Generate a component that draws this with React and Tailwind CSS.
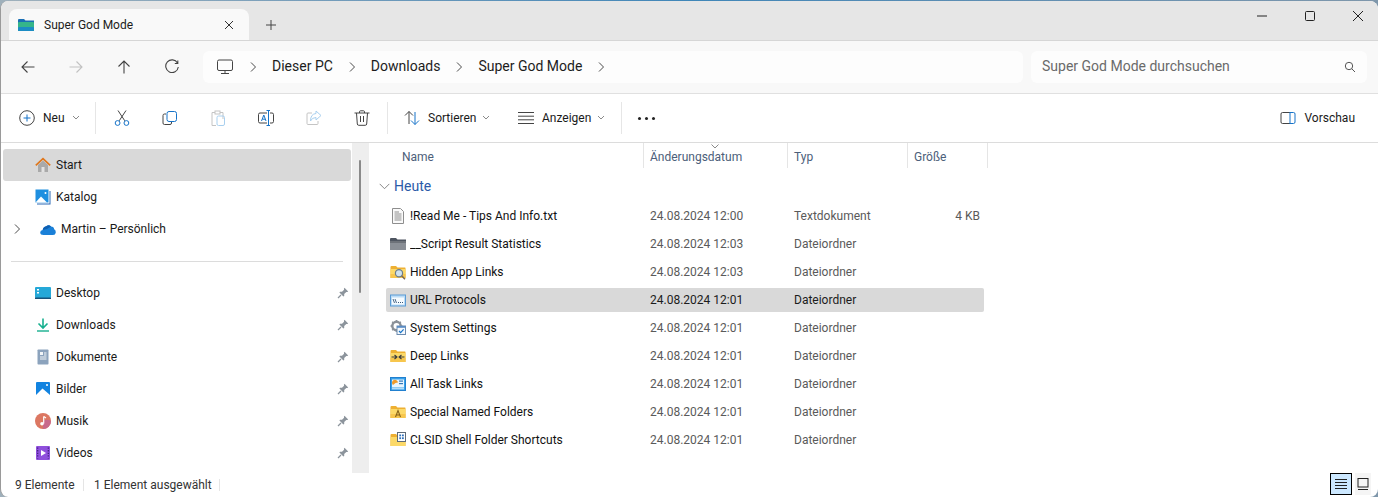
import React from "react"

const Chev = ({ className = "" }) => (
  <svg viewBox="0 0 8 12" className={`w-2 h-3 ${className}`} fill="none" stroke="#4a4a4a" strokeWidth="1">
    <path d="M2 1.5 L6.5 6 L2 10.5" />
  </svg>
)

const SmallDown = () => (
  <svg viewBox="0 0 8 6" className="w-2 h-1.5" fill="none" stroke="#8a8a8a" strokeWidth="1">
    <path d="M1 1 L4 4 L7 1" />
  </svg>
)

const Ico = ({ children, size = 16, vb = "0 0 16 16", className = "" }) => (
  <svg viewBox={vb} width={size} height={size} className={`shrink-0 ${className}`} fill="none">
    {children}
  </svg>
)

const NavArrow = ({ d, color = "#444" }) => (
  <Ico size={16}>
    <path d={d} stroke={color} strokeWidth="1.1" />
  </Ico>
)

const Pin = () => (
  <Ico size={12} vb="0 0 12 12">
    <path d="M7.5 0.8 L11.2 4.5 L10.3 5.1 L9.3 4.9 L7.2 7 L7.2 9 L6.4 9.6 L2.4 5.6 L3 4.8 L5 4.8 L7.1 2.7 L6.9 1.7 Z" fill="#8c949c" />
    <path d="M4 8 L1 11" stroke="#8c949c" strokeWidth="1.2" />
  </Ico>
)

const FolderBase = ({ children, from = "#fcd968", to = "#f4b93c" }) => (
  <Ico>
    <path d="M0.5 3 Q0.5 2 1.5 2 L6 2 L7.5 3.5 L15 3.5 Q15.5 3.5 15.5 4 L15.5 14 L0.5 14 Z" fill="#eeb032" />
    <rect x="0.5" y="5" width="15" height="9" rx="0.5" fill={from} />
    <rect x="0.5" y="10" width="15" height="4" fill={to} opacity="0.6" />
    {children}
  </Ico>
)

const navIcons = {
  home: (
    <Ico>
      <path d="M3 8 L8 3.5 L13 8 L13 15 L3 15 Z" fill="#a9a9a9" />
      <rect x="6.5" y="10" width="3" height="5" fill="#e2e2e2" />
      <path d="M0.8 8.3 L8 1.6 L15.2 8.3" stroke="#e0771c" strokeWidth="1.7" />
    </Ico>
  ),
  gallery: (
    <Ico>
      <rect x="0.5" y="0.5" width="13" height="13" fill="#1f8fe0" />
      <path d="M0.5 13.5 L6 7.5 L12 13.5 Z" fill="#fff" />
      <circle cx="10.5" cy="4" r="1" fill="#fff" />
      <path d="M14.5 2 L15.5 2 L15.5 15.5 L2 15.5 L2 14.5 L14.5 14.5 Z" fill="#2a68b5" />
    </Ico>
  ),
  cloud: (
    <Ico>
      <path d="M3.5 14 Q0.2 14 0.2 11.5 Q0.2 9.3 2.7 9 Q3.2 5.8 6.2 5.2 Q8.8 3 11 5.4 Q14 5.6 14.2 8.3 Q16 9 15.8 11.5 Q15.5 14 13 14 Z" fill="#1a80d8" />
      <path d="M2.7 9 Q3.2 5.8 6.2 5.2 Q8.8 3 11 5.4 L7 8 Z" fill="#0e5fb2" />
    </Ico>
  ),
  desktop: (
    <Ico>
      <rect x="0" y="2" width="16" height="11" rx="1" fill="#25a8d8" />
      <rect x="0" y="12.5" width="16" height="1.5" fill="#17527a" />
      <rect x="2" y="4" width="2" height="1.5" fill="#fff" />
      <rect x="2" y="7" width="2" height="1.5" fill="#fff" />
    </Ico>
  ),
  download: (
    <Ico>
      <path d="M8 1.5 L8 10.5 M3.5 6.5 L8 11 L12.5 6.5" stroke="#17b08f" strokeWidth="1.6" />
      <rect x="2" y="13.3" width="12" height="1.4" fill="#17b08f" />
    </Ico>
  ),
  docs: (
    <Ico>
      <rect x="2.5" y="0.5" width="11" height="15" rx="0.8" fill="#8ca3bd" />
      <path d="M5 4 H7.5 M9 4 H11.5 M9 6 H11.5 M5 8 H11.5 M5 10 H11.5" stroke="#f2f5f8" strokeWidth="1.1" />
      <rect x="5" y="3" width="3" height="3" fill="#f2f5f8" />
    </Ico>
  ),
  pics: (
    <Ico>
      <rect x="1" y="1" width="14" height="14" rx="1" fill="#1283e0" />
      <path d="M1 14 L7.5 7.5 L15 14 L15 15 L1 15 Z" fill="#fff" />
      <circle cx="12" cy="4" r="1" fill="#fff" />
    </Ico>
  ),
  music: (
    <Ico>
      <circle cx="8" cy="8" r="8" fill="#dc7762" />
      <path d="M8 8 A8 8 0 0 1 16 8 A8 8 0 0 1 8 16 Z" fill="#c86a8c" />
      <path d="M8.7 3.5 L8.7 10.5" stroke="#fff" strokeWidth="1.2" />
      <circle cx="7" cy="10.8" r="1.8" fill="#fff" />
      <path d="M8.7 3.5 L11 5" stroke="#fff" strokeWidth="1.2" />
    </Ico>
  ),
  video: (
    <Ico>
      <rect x="1" y="1" width="14" height="14" rx="1" fill="#8f4fdc" />
      <path d="M6 5 L11 8 L6 11 Z" fill="#fff" />
      <path d="M2.7 2.5 V13.5 M13.3 2.5 V13.5" stroke="#3d1f78" strokeWidth="1.2" strokeDasharray="1.3 1.3" />
    </Ico>
  ),
}

const fileIcons = {
  txt: (
    <Ico>
      <path d="M2.5 0.5 L10.5 0.5 L13.5 3.5 L13.5 15.5 L2.5 15.5 Z" fill="#fafafa" stroke="#8e8e8e" />
      <path d="M4.5 4 H9 M4.5 6 H11.5 M4.5 8 H11.5 M4.5 10 H11.5 M4.5 12 H11.5" stroke="#8e8e8e" />
    </Ico>
  ),
  dark: (
    <Ico>
      <path d="M0 3 Q0 2 1 2 L6 2 L7.5 3.5 L16 3.5 L16 14 L0 14 Z" fill="#4e5560" />
      <rect x="0" y="5" width="16" height="9" rx="0.5" fill="#8a8f96" />
      <rect x="0" y="5" width="16" height="2" fill="#6d7279" />
    </Ico>
  ),
  search: (
    <FolderBase>
      <circle cx="9" cy="9.2" r="3.6" fill="#cfe2ef" stroke="#6b7d8c" strokeWidth="1.2" />
      <path d="M11.6 11.8 L15 15.2" stroke="#7b6a55" strokeWidth="1.6" />
    </FolderBase>
  ),
  url: (
    <Ico>
      <rect x="0.5" y="3" width="15" height="11" fill="#bcdcf6" stroke="#5b9bd5" />
      <rect x="2" y="5.5" width="12" height="7" fill="#f6fbff" />
      <path d="M3 7 L4.5 11 M5 7 L6.5 11" stroke="#38587a" strokeWidth="0.9" />
      <path d="M8 10.5 H13" stroke="#38587a" strokeDasharray="1 1" />
    </Ico>
  ),
  gear: (
    <Ico>
      <circle cx="6.5" cy="6" r="4.2" stroke="#8a9097" strokeWidth="2.4" />
      <path d="M6.5 0 V2 M6.5 10 V12 M0.5 6 H2.5 M10.5 6 H12.5 M2.2 1.8 L3.6 3.2 M9.4 8.8 L10.8 10.2 M10.8 1.8 L9.4 3.2 M2.2 10.2 L3.6 8.8" stroke="#8a9097" strokeWidth="1.6" />
      <rect x="7" y="6" width="8.5" height="8.5" fill="#f4f8fc" stroke="#6c8cb0" />
      <rect x="7" y="6" width="8.5" height="1.8" fill="#5a8cc4" />
      <path d="M9 11 L10.6 12.6 L13.6 9.4" stroke="#1673c8" strokeWidth="1.2" />
    </Ico>
  ),
  arrows: (
    <FolderBase>
      <path d="M1.5 9 H6.5 M4.5 7 L7 9 L4.5 11 M14.5 9 H9.5 M11.5 7 L9 9 L11.5 11" stroke="#3d3d3d" strokeWidth="1.1" />
    </FolderBase>
  ),
  task: (
    <Ico>
      <rect x="0.5" y="1.5" width="15" height="13" fill="#37a0ea" stroke="#2180cf" />
      <rect x="2" y="3.5" width="12" height="8" fill="#e8f5fe" />
      <path d="M3 9 A3 3 0 1 1 8 6.5 L5.5 7 Z" fill="#ee9b2c" />
      <rect x="9" y="4.5" width="4" height="1.2" fill="#3579b8" />
      <rect x="9" y="7" width="4" height="1.2" fill="#3579b8" />
      <rect x="2" y="12.3" width="12" height="1" fill="#e8f5fe" />
    </Ico>
  ),
  letter: (
    <FolderBase>
      <path d="M5.5 13 L8 6.5 L10.5 13 M6.5 11 H9.5" stroke="#86621a" strokeWidth="1.1" />
    </FolderBase>
  ),
  clsid: (
    <Ico>
      <path d="M0.5 3 Q0.5 2 1.5 2 L6 2 L7.5 3.5 L15.5 3.5 L15.5 14 L0.5 14 Z" fill="#eeb032" />
      <rect x="0.5" y="5" width="15" height="9" rx="0.5" fill="#fcd968" />
      <rect x="7.5" y="0.5" width="8" height="9" fill="#fff" stroke="#5f6b78" />
      <rect x="9.3" y="2.5" width="1.8" height="1.8" fill="#2e6fb8" />
      <rect x="12" y="2.5" width="1.8" height="1.8" fill="#2e6fb8" />
      <rect x="9.3" y="5.3" width="1.8" height="1.8" fill="#2e6fb8" />
      <rect x="12" y="5.3" width="1.8" height="1.8" fill="#2e6fb8" />
    </Ico>
  ),
}

const quick = [
  ["Desktop", "desktop"],
  ["Downloads", "download"],
  ["Dokumente", "docs"],
  ["Bilder", "pics"],
  ["Musik", "music"],
  ["Videos", "video"],
]

const files = [
  { name: "!Read Me - Tips And Info.txt", icon: "txt", date: "24.08.2024 12:00", type: "Textdokument", size: "4 KB" },
  { name: "__Script Result Statistics", icon: "dark", date: "24.08.2024 12:03", type: "Dateiordner" },
  { name: "Hidden App Links", icon: "search", date: "24.08.2024 12:03", type: "Dateiordner" },
  { name: "URL Protocols", icon: "url", date: "24.08.2024 12:01", type: "Dateiordner", selected: true },
  { name: "System Settings", icon: "gear", date: "24.08.2024 12:01", type: "Dateiordner" },
  { name: "Deep Links", icon: "arrows", date: "24.08.2024 12:01", type: "Dateiordner" },
  { name: "All Task Links", icon: "task", date: "24.08.2024 12:01", type: "Dateiordner" },
  { name: "Special Named Folders", icon: "letter", date: "24.08.2024 12:01", type: "Dateiordner" },
  { name: "CLSID Shell Folder Shortcuts", icon: "clsid", date: "24.08.2024 12:01", type: "Dateiordner" },
]

const ToolBtn = ({ children }) => <div className="w-12 flex justify-center">{children}</div>
const Sep = () => <div className="w-px h-8 bg-[#e6e6e6] shrink-0" />

export default function App() {
  return (
    <div className="w-[1378px] h-[497px] overflow-hidden bg-gradient-to-r from-[#9fb0bb] via-[#3f86b8] to-[#7f97ab] pt-px font-['Roboto',sans-serif] text-[12px] text-[#1a1a1a]">
      <div className="h-[496px] flex flex-col bg-white rounded-t-lg rounded-b-lg border-l border-[#9a9a9a] overflow-hidden">
        {/* tab strip */}
        <div className="h-[40px] shrink-0 flex bg-[#e6e6e6] border-b border-[#d6d6d6]">
          <div className="mt-2 ml-2 w-[240px] h-[31px] flex items-center bg-[#f9f9f9] rounded-t-lg pl-[9px] pr-[14px]">
            <Ico size={16}>
              <path d="M0 3 Q0 2 1 2 L6 2 L7.5 3.5 L16 3.5 L16 14 L0 14 Z" fill="#1a6fb5" />
              <rect x="0" y="5" width="16" height="9" rx="1" fill="#35b58a" />
              <rect x="0" y="10" width="16" height="4" rx="1" fill="#1c8cc4" />
            </Ico>
            <span className="ml-[10px] text-[12px] text-[#1c1c1c]">Super God Mode</span>
            <Ico size={12} vb="0 0 12 12" className="ml-auto">
              <path d="M2 2 L10 10 M10 2 L2 10" stroke="#333" />
            </Ico>
          </div>
          <div className="ml-[16px] mt-2 h-[31px] flex items-center">
            <Ico size={12} vb="0 0 12 12">
              <path d="M6 1 V11 M1 6 H11" stroke="#444" />
            </Ico>
          </div>
          <div className="ml-auto flex items-center h-[30px] pr-[14px] gap-[36px]">
            <Ico size={12} vb="0 0 12 12">
              <path d="M1 6 H11" stroke="#222" />
            </Ico>
            <Ico size={12} vb="0 0 12 12">
              <rect x="1.5" y="1.5" width="9" height="9" rx="1" stroke="#222" />
            </Ico>
            <Ico size={12} vb="0 0 12 12">
              <path d="M1 1 L11 11 M11 1 L1 11" stroke="#222" />
            </Ico>
          </div>
        </div>

        {/* address row */}
        <div className="h-[53px] shrink-0 flex items-center bg-[#f8f8f8] border-b border-[#e0e0e0] pb-px">
          <div className="flex w-[201px] pl-[19px] gap-[32px]">
            <NavArrow d="M14.5 8 H2 M7.5 2.5 L2 8 L7.5 13.5" />
            <NavArrow d="M1.5 8 H14 M8.5 2.5 L14 8 L8.5 13.5" color="#c2c2c2" />
            <NavArrow d="M8 14.5 V2 M2.5 7.5 L8 2 L13.5 7.5" />
            <NavArrow d="M13.5 4 A6.3 6.3 0 1 0 14.3 8 M13.8 1.5 V4.5 H10.8" />
          </div>
          <div className="w-[820px] h-8 ml-px flex items-center bg-[#fdfdfd] rounded-md text-[14px] text-[#1c1c1c]">
            <Ico size={16} className="ml-[14px]">
              <rect x="0.5" y="1" width="15" height="10.5" rx="1.5" stroke="#444" />
              <path d="M8 11.5 V14 M4 14.5 H12" stroke="#444" />
            </Ico>
            <Chev className="ml-[16px]" />
            <span className="ml-[15px]">Dieser PC</span>
            <Chev className="ml-[15px]" />
            <span className="ml-[15px]">Downloads</span>
            <Chev className="ml-[15px]" />
            <span className="ml-[15px]">Super God Mode</span>
            <Chev className="ml-[15px]" />
          </div>
          <div className="w-[336px] h-8 ml-2 flex items-center justify-between bg-[#fdfdfd] rounded-md px-[11px] text-[14px] text-[#6a6a6a]">
            <span>Super God Mode durchsuchen</span>
            <Ico size={12} vb="0 0 12 12">
              <circle cx="5" cy="5" r="3.7" stroke="#555" />
              <path d="M7.8 7.8 L11 11" stroke="#555" />
            </Ico>
          </div>
        </div>

        {/* toolbar */}
        <div className="h-[49px] shrink-0 flex items-center border-b border-[#dcdcdc]">
          <div className="w-[94px] flex items-center pl-[18px]">
            <Ico>
              <circle cx="8" cy="8" r="7.3" stroke="#444" />
              <path d="M8 4.5 V11.5 M4.5 8 H11.5" stroke="#1673c8" />
            </Ico>
            <span className="ml-2 mr-[7px]">Neu</span>
            <SmallDown />
          </div>
          <Sep />
          <div className="flex ml-[2px]">
            <ToolBtn>
              <Ico>
                <path d="M4 0.5 L10.8 10.8 M12 0.5 L5.2 10.8" stroke="#444" />
                <circle cx="3.6" cy="13" r="2.4" stroke="#1673c8" />
                <circle cx="12.4" cy="13" r="2.4" stroke="#1673c8" />
              </Ico>
            </ToolBtn>
            <ToolBtn>
              <Ico>
                <path d="M4 4 H2.5 Q1 4 1 5.5 V13 Q1 14.5 2.5 14.5 H8 Q9.5 14.5 9.5 13 V12" stroke="#444" />
                <rect x="5" y="1.5" width="9.5" height="10" rx="2" stroke="#1673c8" />
              </Ico>
            </ToolBtn>
            <ToolBtn>
              <Ico>
                <path d="M10 2.5 H13 V9 M6 15.5 H2 V2.5 H5" stroke="#c4c4c4" />
                <rect x="5" y="1" width="5" height="3" stroke="#c4c4c4" />
                <rect x="7" y="6" width="7.5" height="9.5" rx="1.5" stroke="#a9d0ef" />
              </Ico>
            </ToolBtn>
            <ToolBtn>
              <Ico>
                <path d="M9 3 H2 Q0.5 3 0.5 4.5 V11.5 Q0.5 13 2 13 H9 M12 3 H14 Q15.5 3 15.5 4.5 V11.5 Q15.5 13 14 13 H12" stroke="#444" />
                <path d="M8.5 0.5 H12 M10.5 0.5 V15.5 M8.5 15.5 H12" stroke="#1673c8" />
                <path d="M3.5 11 L5.8 5 L8 11 M4.5 9.2 H7.2" stroke="#1673c8" />
              </Ico>
            </ToolBtn>
            <ToolBtn>
              <Ico>
                <path d="M6 3 H2 Q1 3 1 4 V13.5 Q1 14.5 2 14.5 H11 Q12 14.5 12 13.5 V11" stroke="#c4c4c4" />
                <path d="M10 1 L15 5.5 L10 10 V7.5 Q6 7.5 4.5 11 Q4.5 4 10 3.5 Z" stroke="#a9d0ef" />
              </Ico>
            </ToolBtn>
            <ToolBtn>
              <Ico>
                <path d="M0.5 3 H15.5 M5.5 3 V1.8 Q5.5 0.8 6.5 0.8 H9.5 Q10.5 0.8 10.5 1.8 V3 M2.5 3 L3.3 14 Q3.4 15.3 4.8 15.3 H11.2 Q12.6 15.3 12.7 14 L13.5 3 M6.5 6 V12 M9.5 6 V12" stroke="#444" />
              </Ico>
            </ToolBtn>
          </div>
          <div className="ml-[1px]"><Sep /></div>
          <div className="w-[114px] flex items-center pl-4">
            <Ico>
              <path d="M5 14 V1.5 M1 5.5 L5 1.5 L9 5.5" stroke="#444" />
              <path d="M11 2 V14.5 M7 10.5 L11 14.5 L15 10.5" stroke="#1673c8" />
            </Ico>
            <span className="ml-2 mr-[6px]">Sortieren</span>
            <SmallDown />
          </div>
          <div className="w-[119px] flex items-center pl-4">
            <Ico>
              <path d="M0 2.5 H16 M0 6.2 H16 M0 9.8 H16 M0 13.5 H16" stroke="#444" />
            </Ico>
            <span className="ml-2 mr-[6px]">Anzeigen</span>
            <SmallDown />
          </div>
          <Sep />
          <div className="ml-4 flex gap-[4px] w-[18px]">
            <div className="w-[3px] h-[3px] rounded-full bg-[#222]" />
            <div className="w-[3px] h-[3px] rounded-full bg-[#222]" />
            <div className="w-[3px] h-[3px] rounded-full bg-[#222]" />
          </div>
          <div className="ml-auto flex items-center pr-[23px]">
            <Ico>
              <path d="M10 2.5 H2.5 Q1 2.5 1 4 V12 Q1 13.5 2.5 13.5 H10" stroke="#444" />
              <path d="M10 2 V14 M10 2.5 H13.5 Q15 2.5 15 4 V12 Q15 13.5 13.5 13.5 H10" stroke="#1673c8" />
            </Ico>
            <span className="ml-2">Vorschau</span>
          </div>
        </div>

        {/* body */}
        <div className="h-[330px] shrink-0 flex">
          <div className="w-[351px] shrink-0 pt-[6px] pl-[2px]">
            <div className="h-8 w-[348px] flex items-center bg-[#d9d9d9] rounded-[3px] pl-[32px] gap-[5px]">
              {navIcons.home}
              <span>Start</span>
            </div>
            <div className="h-8 w-[348px] flex items-center pl-[32px] gap-[5px]">
              {navIcons.gallery}
              <span>Katalog</span>
            </div>
            <div className="h-8 w-[348px] flex items-center gap-[5px]">
              <div className="w-[32px] flex pl-[10px]">
                <Chev />
              </div>
              {navIcons.cloud}
              <span>Martin – Persönlich</span>
            </div>
            <div className="h-8 flex items-center pl-[8px]">
              <div className="w-[332px] h-px bg-[#dcdcdc]" />
            </div>
            {quick.map(([label, icon]) => (
              <div key={label} className="h-8 w-[348px] flex items-center pl-[32px] pr-[2px] gap-[5px]">
                {navIcons[icon]}
                <span>{label}</span>
                <div className="ml-auto">
                  <Pin />
                </div>
              </div>
            ))}
          </div>

          <div className="w-[17px] shrink-0 bg-[#eeeeee] pt-[17px] pl-[7px]">
            <div className="w-[2px] h-[133px] bg-[#8a8a8a] rounded-full" />
          </div>

          <div className="flex-1 min-w-0">
            <div className="relative h-[25px] flex text-[#4c607a]">
              <div className="w-[275px] border-r border-[#e5e5e5] pl-[33px] flex items-center pt-[2px]">Name</div>
              <div className="relative w-[144px] border-r border-[#e5e5e5] pl-[6px] flex items-center pt-[2px]">
                Änderungsdatum
                <svg viewBox="0 0 8 5" className="absolute left-[67px] top-[1px] w-2 h-[5px]" fill="none" stroke="#8a8a8a">
                  <path d="M0.5 0.5 L4 4 L7.5 0.5" />
                </svg>
              </div>
              <div className="w-[120px] border-r border-[#e5e5e5] pl-[6px] flex items-center pt-[2px]">Typ</div>
              <div className="w-[80px] border-r border-[#e5e5e5] pl-[6px] flex items-center pt-[2px]">Größe</div>
            </div>
            <div className="h-[36px] flex items-center pl-[10px] gap-[4px] text-[14px] text-[#2b5aa8]">
              <svg viewBox="0 0 12 8" className="w-[11px] h-[7px]" fill="none" stroke="#777">
                <path d="M0.5 1 L6 6.5 L11.5 1" />
              </svg>
              <span>Heute</span>
            </div>
            <div className="pl-[17px] flex flex-col gap-1 pt-[-1px]">
              {files.map((f) => (
                <div
                  key={f.name}
                  className={`w-[598px] h-6 flex items-center pl-1 pr-1 rounded-[2px] ${f.selected ? "bg-[#d9d9d9]" : ""}`}
                >
                  {fileIcons[f.icon]}
                  <span className="ml-1 w-[240px] truncate text-[#111]">{f.name}</span>
                  <span className={`w-[144px] ${f.selected ? "text-[#1c1c1c]" : "text-[#5a5a5a]"}`}>{f.date}</span>
                  <span className={`w-[120px] ${f.selected ? "text-[#1c1c1c]" : "text-[#5a5a5a]"}`}>{f.type}</span>
                  <span className="w-[66px] text-right text-[#5a5a5a]">{f.size}</span>
                </div>
              ))}
            </div>
          </div>
        </div>

        {/* status bar */}
        <div className="flex-1 flex items-center pl-[14px] text-[#333]">
          <span className="w-[68px]">9 Elemente</span>
          <div className="w-px h-[12px] bg-[#e5e5e5]" />
          <span className="ml-[10px] w-[125px]">1 Element ausgewählt</span>
          <div className="w-px h-[12px] bg-[#e5e5e5]" />
          <div className="ml-auto flex items-start self-start pr-[7px] gap-[3px]">
            <div className="w-[22px] h-[22px] flex items-center justify-center bg-[#cce8ff] border border-black">
              <Ico size={14} vb="0 0 14 14">
                <path d="M1 2.5 H13 M1 5.5 H13 M1 8.5 H13 M1 11.5 H13" stroke="#222" />
              </Ico>
            </div>
            <div className="w-4 h-[22px] flex items-center justify-center bg-[#f5f5f5]">
              <Ico size={14} vb="0 0 14 14">
                <rect x="2" y="1.5" width="10" height="8.5" stroke="#222" />
                <path d="M2 12.5 H12" stroke="#222" />
              </Ico>
            </div>
          </div>
        </div>
      </div>
    </div>
  )
}
